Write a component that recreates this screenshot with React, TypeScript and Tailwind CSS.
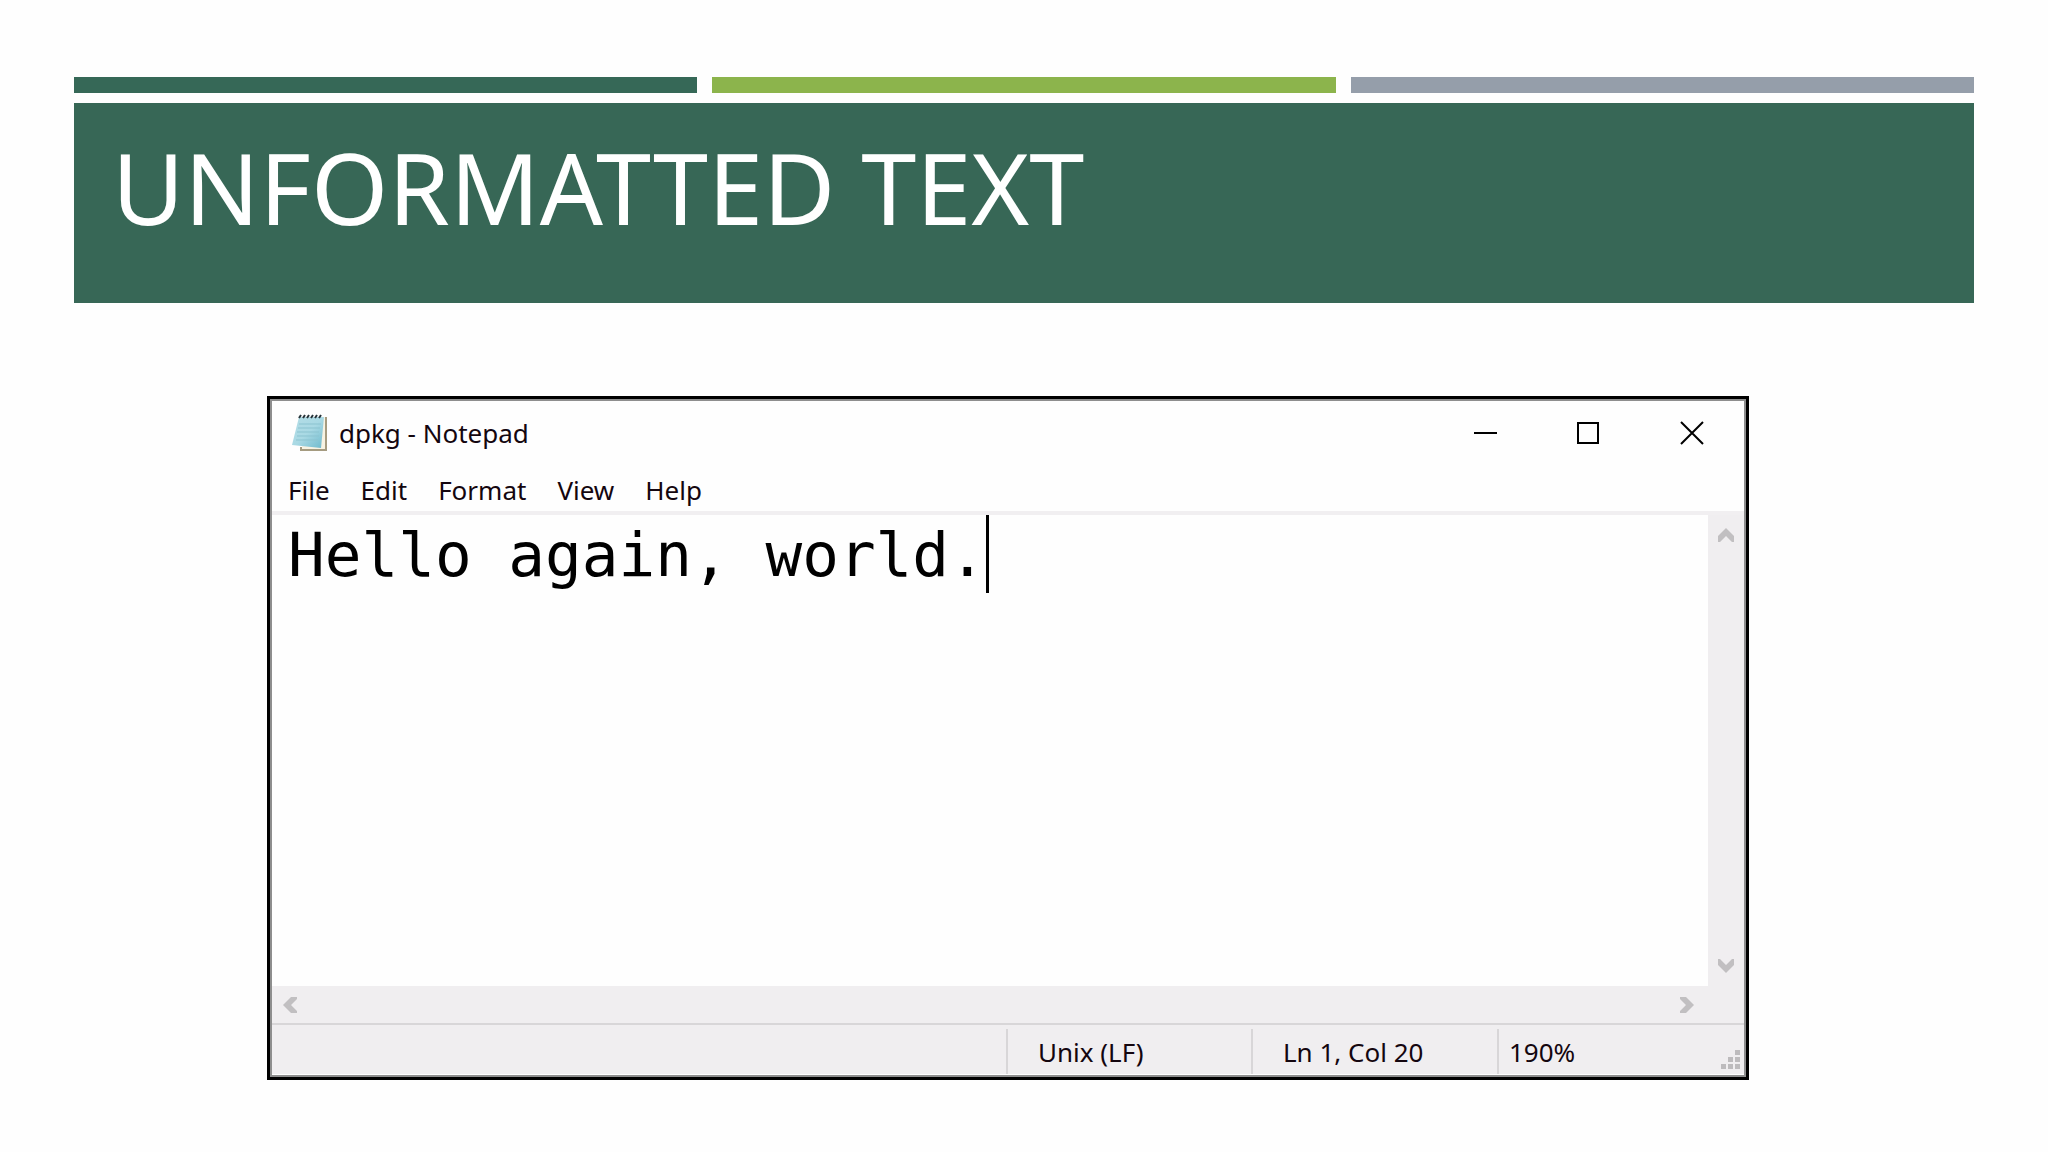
import { useState } from "react";

const MENUS = ["File", "Edit", "Format", "View", "Help"];
const STATUS = [
  { text: "Unix (LF)", pad: "pl-[30px]" },
  { text: "Ln 1, Col 20", pad: "pl-[30px]" },
  { text: "190%", pad: "pl-[10px]" },
];

function NotepadIcon() {
  return (
    <svg width="38" height="40" viewBox="0 0 38 40" aria-hidden="true">
      <defs>
        <linearGradient id="sheet" x1="0" y1="0" x2="1" y2="1">
          <stop offset="0" stopColor="#b4dde6" />
          <stop offset="0.5" stopColor="#a9d9e4" />
          <stop offset="1" stopColor="#6db9cc" />
        </linearGradient>
      </defs>
      <path d="M30 4h6v34H9v-4h21z" fill="#a59b80" />
      <path d="M29 4h5v32H11v-3h18z" fill="#f7f2e2" />
      <path d="M8 4h25l-3 31-29-3z" fill="url(#sheet)" />
      <path d="M8 11h22M7 15h22M6 19h22M6 23h22M5 27h22" stroke="#8bc3d0" strokeWidth="1" />
      <path
        d="M8 5l2-3M12 5l2-3M16 5l2-3M20 5l2-3M24 5l2-3M28 5l2-3"
        stroke="#26343a"
        strokeWidth="2"
      />
    </svg>
  );
}

function Chevron({ rotate }: { rotate: string }) {
  return (
    <svg className={rotate} width="18" height="16" viewBox="0 0 18 16" aria-hidden="true">
      <path d="M1 9l8-8 8 8v6h-2l-6-6-6 6H1z" fill="#c1bfc1" />
    </svg>
  );
}

function Grip() {
  return (
    <svg width="20" height="20" viewBox="0 0 20 20" aria-hidden="true" className="absolute right-1 bottom-1">
      <path d="M15 0h5v5h-5zM8 7h5v5H8zM15 7h5v5h-5zM1 14h5v5H1zM8 14h5v5H8zM15 14h5v5h-5z" fill="#bdbbbd" />
    </svg>
  );
}

function Notepad() {
  const [text, setText] = useState("Hello again, world.");
  return (
    <section
      aria-label="dpkg - Notepad"
      className="border-3 border-black bg-[#fefefe] font-['Noto_Sans','Open_Sans',sans-serif] text-[26px] leading-9 text-[#14060f]"
    >
      <div className="border-2 border-[#8e8e8e]">
        <header className="flex h-16 items-center justify-between pl-[19px]">
          <div className="flex items-center gap-[10px]">
            <NotepadIcon />
            <span>dpkg - Notepad</span>
          </div>
          <div className="flex h-full items-center">
            <button aria-label="Minimize" className="grid h-full w-[102px] place-items-center">
              <svg width="24" height="24" viewBox="0 0 24 24">
                <path d="M1 12h23" stroke="#000" strokeWidth="2" />
              </svg>
            </button>
            <button aria-label="Maximize" className="grid h-full w-[104px] place-items-center">
              <svg width="24" height="24" viewBox="0 0 24 24">
                <path d="M2 2h20v20H2z" fill="none" stroke="#000" strokeWidth="2" />
              </svg>
            </button>
            <button aria-label="Close" className="grid h-full w-[104px] place-items-center">
              <svg width="24" height="24" viewBox="0 0 24 24">
                <path d="M1 1l22 22M23 1L1 23" stroke="#000" strokeWidth="2" />
              </svg>
            </button>
          </div>
        </header>

        <nav className="flex h-[50px] items-center gap-[31px] border-b-4 border-[#f1eff1] pt-1 pl-4">
          {MENUS.map((m) => (
            <button key={m}>{m}</button>
          ))}
        </nav>

        <div className="flex">
          <div className="flex min-h-[471px] min-w-0 flex-1 items-start overflow-hidden pl-4">
            <textarea
              aria-label="Document text"
              rows={1}
              value={text}
              spellCheck={false}
              onChange={(e) => setText(e.target.value)}
              className="field-sizing-content h-20 resize-none overflow-hidden whitespace-pre font-['DejaVu_Sans_Mono',monospace] text-[61px] leading-20 text-black outline-none"
            />
            <span className="h-[78px] w-[3px] bg-black" />
          </div>
          <div className="flex w-9 flex-col items-center justify-between bg-[#f0eef0] pt-3 pb-3">
            <button aria-label="Scroll up">
              <Chevron rotate="rotate-0" />
            </button>
            <button aria-label="Scroll down">
              <Chevron rotate="rotate-180" />
            </button>
          </div>
        </div>
        <div className="flex h-[37px] items-center justify-between bg-[#f0eef0] pr-12 pl-[9px]">
          <button aria-label="Scroll left">
            <Chevron rotate="-rotate-90" />
          </button>
          <button aria-label="Scroll right">
            <Chevron rotate="rotate-90" />
          </button>
        </div>

        <footer className="relative grid h-[52px] grid-cols-[734fr_245fr_246fr_247fr] border-t-2 border-b border-t-[#d8d6d8] border-b-white bg-[#f0eef0] pt-1">
          <span />
          {STATUS.map((s) => (
            <span key={s.text} className={`flex items-center border-l-2 border-[#d8d6d8] whitespace-nowrap ${s.pad}`}>
              {s.text}
            </span>
          ))}
          <Grip />
        </footer>
      </div>
    </section>
  );
}

export default function App() {
  return (
    <main className="min-h-screen bg-[#fefefe] px-[74px] pt-[77px] pb-[70px]">
      <div className="grid grid-cols-3 gap-[15px]">
        <div className="h-4 bg-[#366857]" />
        <div className="h-4 bg-[#8cb44c]" />
        <div className="h-4 bg-[#959eaa]" />
      </div>
      <header className="mt-[10px] h-[200px] bg-[#376756] pt-6 pl-[38px]">
        <h1 className="font-['Noto_Sans','Open_Sans',sans-serif] text-[99px] leading-[120px] whitespace-nowrap text-white uppercase">
          Unformatted Text
        </h1>
      </header>
      <div className="mt-[93px] pr-[225px] pl-[193px]">
        <Notepad />
      </div>
    </main>
  );
}
